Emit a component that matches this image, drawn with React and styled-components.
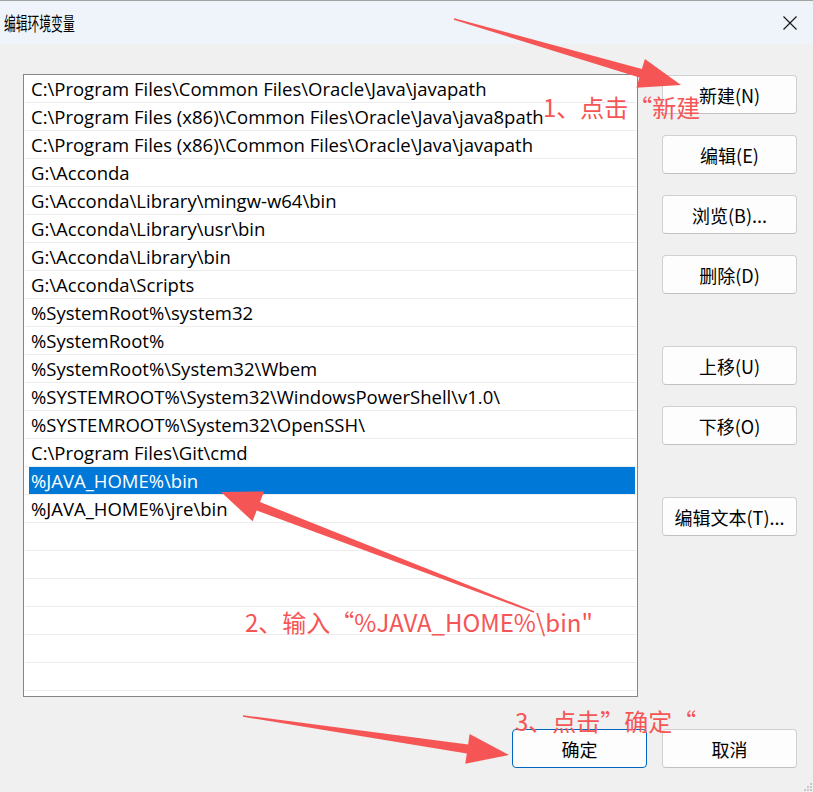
import React from 'react';
import styled, { createGlobalStyle } from 'styled-components';

const GlobalStyle = createGlobalStyle`
  html, body { margin: 0; padding: 0; background: #f0f0f0; }
  body { font-family: "Open Sans", "Noto Sans CJK SC", sans-serif; }
  * { box-sizing: border-box; }
`;

const Window = styled.div`
  position: relative;
  width: 813px;
  height: 792px;
  background: #f0f0f0;
  overflow: hidden;
  display: flex;
  flex-direction: column;
`;

const TitleBar = styled.div`
  height: 44px;
  border-top: 1px solid #a3a3a3;
  background: #eef4f9;
  display: flex;
  align-items: center;
  justify-content: space-between;
  padding-left: 4px;
`;

const Title = styled.div`
  font-family: "Noto Sans CJK SC", sans-serif;
  font-size: 19px;
  color: #000;
  transform: scaleX(0.62);
  transform-origin: left center;
  line-height: 1;
`;

const CloseBtn = styled.div`
  width: 46px;
  height: 43px;
  display: flex;
  align-items: center;
  justify-content: center;
`;

const Body = styled.div`
  display: flex;
  gap: 24px;
  padding: 30px 16px 0 23px;
`;

const List = styled.div`
  width: 616px;
  height: 623px;
  border: 1px solid #868686;
  background: #fff;
  display: flex;
  flex-direction: column;
  overflow: hidden;
`;

const Row = styled.div`
  height: 28px;
  flex: none;
  margin: 0 1px;
  border-bottom: 1px solid #ececec;
  display: flex;
`;

const Cell = styled.div`
  flex: 1;
  margin: 0 1px 0 4px;
  padding-left: 2px;
  display: flex;
  align-items: center;
  font-family: "Open Sans", "Noto Sans CJK SC", sans-serif;
  font-size: 18.5px;
  color: ${p => (p.$selected ? '#fff' : '#000')};
  background: ${p => (p.$selected ? '#0078d7' : 'transparent')};
  white-space: nowrap;
`;

const Side = styled.div`
  width: 135px;
  display: flex;
  flex-direction: column;
  padding-top: 1px;
`;

const Button = styled.div`
  width: 135px;
  height: 39px;
  flex: none;
  margin-top: ${p => p.$top || 0}px;
  border: 1px solid ${p => (p.$focus ? '#0067c0' : '#d0d0d0')};
  border-bottom-color: ${p => (p.$focus ? '#0067c0' : '#c2c2c2')};
  border-radius: 4px;
  background: #fdfdfd;
  display: flex;
  align-items: center;
  justify-content: center;
  font-family: "Noto Sans CJK SC", sans-serif;
  font-size: 18px;
  color: #000;
`;

const Footer = styled.div`
  display: flex;
  justify-content: flex-end;
  gap: 15px;
  padding-right: 16px;
  margin-top: 32px;
`;

const Overlay = styled.svg`
  position: absolute;
  left: 0;
  top: 0;
  pointer-events: none;
`;

const Note = styled.div`
  position: absolute;
  left: ${p => p.$x}px;
  top: ${p => p.$y}px;
  font-family: "Noto Sans CJK SC", sans-serif;
  font-size: 24px;
  line-height: 1;
  color: #f65555;
  white-space: nowrap;
`;

const Grip = styled.svg`
  position: absolute;
  right: 0;
  bottom: 0;
`;

const paths = [
  'C:\\Program Files\\Common Files\\Oracle\\Java\\javapath',
  'C:\\Program Files (x86)\\Common Files\\Oracle\\Java\\java8path',
  'C:\\Program Files (x86)\\Common Files\\Oracle\\Java\\javapath',
  'G:\\Acconda',
  'G:\\Acconda\\Library\\mingw-w64\\bin',
  'G:\\Acconda\\Library\\usr\\bin',
  'G:\\Acconda\\Library\\bin',
  'G:\\Acconda\\Scripts',
  '%SystemRoot%\\system32',
  '%SystemRoot%',
  '%SystemRoot%\\System32\\Wbem',
  '%SYSTEMROOT%\\System32\\WindowsPowerShell\\v1.0\\',
  '%SYSTEMROOT%\\System32\\OpenSSH\\',
  'C:\\Program Files\\Git\\cmd',
  '%JAVA_HOME%\\bin',
  '%JAVA_HOME%\\jre\\bin',
];

const rows = [...paths, ...Array(22 - paths.length).fill('')];

const sideButtons = [
  { label: '新建(N)', top: 0 },
  { label: '编辑(E)', top: 21 },
  { label: '浏览(B)...', top: 21 },
  { label: '删除(D)', top: 21 },
  { label: '上移(U)', top: 52 },
  { label: '下移(O)', top: 21 },
  { label: '编辑文本(T)...', top: 52 },
];

function arrowPath(tail, tip, headLen, headHalf, shaftHalf, tailHalf) {
  const dx = tip[0] - tail[0];
  const dy = tip[1] - tail[1];
  const len = Math.hypot(dx, dy);
  const ux = dx / len, uy = dy / len;
  const nx = -uy, ny = ux;
  const bx = tip[0] - ux * headLen, by = tip[1] - uy * headLen;
  const p = [
    [tail[0] + nx * tailHalf, tail[1] + ny * tailHalf],
    [bx + nx * shaftHalf, by + ny * shaftHalf],
    [bx + nx * headHalf, by + ny * headHalf],
    tip,
    [bx - nx * headHalf, by - ny * headHalf],
    [bx - nx * shaftHalf, by - ny * shaftHalf],
    [tail[0] - nx * tailHalf, tail[1] - ny * tailHalf],
  ];
  return 'M' + p.map(q => q[0].toFixed(1) + ' ' + q[1].toFixed(1)).join(' L') + ' Z';
}

const arrows = [
  arrowPath([454, 19], [681, 85], 42, 15, 4.5, 0.8),
  arrowPath([534, 612], [221, 492], 40, 16, 4.5, 0.8),
  arrowPath([243, 716], [509, 755], 42, 15, 4.5, 0.8),
];

export default function App() {
  return (
    <>
      <GlobalStyle />
      <Window>
        <TitleBar>
          <Title>编辑环境变量</Title>
          <CloseBtn>
            <svg width="16" height="16" viewBox="0 0 16 16">
              <path d="M1.5 1.5 L14.5 14.5 M14.5 1.5 L1.5 14.5" stroke="#1a1a1a" strokeWidth="1.2" fill="none" />
            </svg>
          </CloseBtn>
        </TitleBar>
        <Body>
          <List>
            {rows.map((r, i) => (
              <Row key={i}>
                <Cell $selected={i === 14}>{r}</Cell>
              </Row>
            ))}
          </List>
          <Side>
            {sideButtons.map(b => (
              <Button key={b.label} $top={b.top}>{b.label}</Button>
            ))}
          </Side>
        </Body>
        <Footer>
          <Button $focus>确定</Button>
          <Button>取消</Button>
        </Footer>
        <Overlay width="813" height="792" viewBox="0 0 813 792">
          {arrows.map((d, i) => (
            <path key={i} d={d} fill="#f65555" />
          ))}
        </Overlay>
        <Note $x={543} $y={95}>1、点击“新建</Note>
        <Note $x={245} $y={610}>2、输入“%JAVA_HOME%\bin"</Note>
        <Note $x={515} $y={709}>3、点击”确定“</Note>
        <Grip width="10" height="10" viewBox="0 0 10 10">
          <rect x="7" y="1" width="2" height="2" fill="#c8c8c8" />
          <rect x="4" y="4" width="2" height="2" fill="#c8c8c8" />
          <rect x="7" y="4" width="2" height="2" fill="#c8c8c8" />
          <rect x="1" y="7" width="2" height="2" fill="#c8c8c8" />
          <rect x="4" y="7" width="2" height="2" fill="#c8c8c8" />
          <rect x="7" y="7" width="2" height="2" fill="#c8c8c8" />
        </Grip>
      </Window>
    </>
  );
}
